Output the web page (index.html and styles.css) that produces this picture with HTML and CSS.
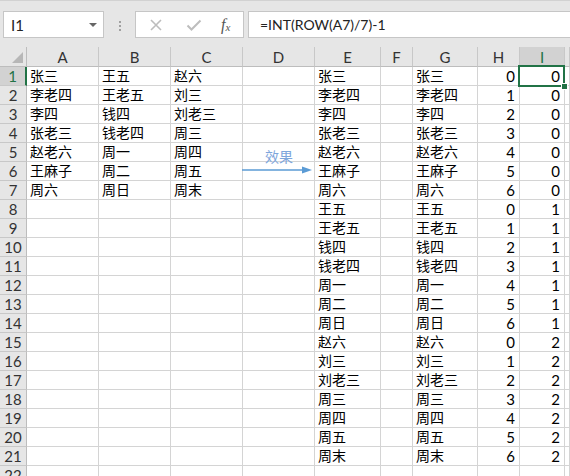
FILE: index.html
```html
<!DOCTYPE html>
<html>
<head>
<meta charset="utf-8">
<link rel="stylesheet" href="styles.css">
</head>
<body>
<div class="app">
  <div class="fbar">
    <div class="namebox"><span class="nb-text">I1</span><span class="nb-caret"></span></div>
    <div class="dots"><i></i><i></i><i></i></div>
    <div class="btnbox">
      <svg class="ic" width="14" height="14" viewBox="0 0 14 14"><path d="M2 2 L12 12 M12 2 L2 12" stroke="#bdbdbd" stroke-width="1.6" fill="none"/></svg>
      <svg class="ic" width="16" height="14" viewBox="0 0 16 14"><path d="M1.5 7.5 L5.5 11.5 L14.5 2.5" stroke="#bdbdbd" stroke-width="2" fill="none"/></svg>
      <span class="fx">f<sub>x</sub></span>
    </div>
    <div class="formula">=INT(ROW(A7)/7)-1</div>
  </div>

  <div class="sheet">
    <div class="row head">
      <div class="c corner"><span class="tri"></span></div>
      <div class="c">A</div><div class="c">B</div><div class="c">C</div><div class="c">D</div><div class="c">E</div><div class="c">F</div><div class="c">G</div><div class="c">H</div><div class="c sel">I</div><div class="c"></div>
    </div>
    <div class="row"><div class="c rh selr">1</div><div class="c">张三</div><div class="c">王五</div><div class="c">赵六</div><div class="c"></div><div class="c">张三</div><div class="c"></div><div class="c">张三</div><div class="c n">0</div><div class="c n active">0<span class="selbox"></span><span class="handle"></span></div><div class="c"></div></div>
    <div class="row"><div class="c rh">2</div><div class="c">李老四</div><div class="c">王老五</div><div class="c">刘三</div><div class="c"></div><div class="c">李老四</div><div class="c"></div><div class="c">李老四</div><div class="c n">1</div><div class="c n">0</div><div class="c"></div></div>
    <div class="row"><div class="c rh">3</div><div class="c">李四</div><div class="c">钱四</div><div class="c">刘老三</div><div class="c"></div><div class="c">李四</div><div class="c"></div><div class="c">李四</div><div class="c n">2</div><div class="c n">0</div><div class="c"></div></div>
    <div class="row"><div class="c rh">4</div><div class="c">张老三</div><div class="c">钱老四</div><div class="c">周三</div><div class="c"></div><div class="c">张老三</div><div class="c"></div><div class="c">张老三</div><div class="c n">3</div><div class="c n">0</div><div class="c"></div></div>
    <div class="row"><div class="c rh">5</div><div class="c">赵老六</div><div class="c">周一</div><div class="c">周四</div><div class="c"></div><div class="c">赵老六</div><div class="c"></div><div class="c">赵老六</div><div class="c n">4</div><div class="c n">0</div><div class="c"></div></div>
    <div class="row"><div class="c rh">6</div><div class="c">王麻子</div><div class="c">周二</div><div class="c">周五</div><div class="c"></div><div class="c">王麻子</div><div class="c"></div><div class="c">王麻子</div><div class="c n">5</div><div class="c n">0</div><div class="c"></div></div>
    <div class="row"><div class="c rh">7</div><div class="c">周六</div><div class="c">周日</div><div class="c">周末</div><div class="c"></div><div class="c">周六</div><div class="c"></div><div class="c">周六</div><div class="c n">6</div><div class="c n">0</div><div class="c"></div></div>
    <div class="row"><div class="c rh">8</div><div class="c"></div><div class="c"></div><div class="c"></div><div class="c"></div><div class="c">王五</div><div class="c"></div><div class="c">王五</div><div class="c n">0</div><div class="c n">1</div><div class="c"></div></div>
    <div class="row"><div class="c rh">9</div><div class="c"></div><div class="c"></div><div class="c"></div><div class="c"></div><div class="c">王老五</div><div class="c"></div><div class="c">王老五</div><div class="c n">1</div><div class="c n">1</div><div class="c"></div></div>
    <div class="row"><div class="c rh">10</div><div class="c"></div><div class="c"></div><div class="c"></div><div class="c"></div><div class="c">钱四</div><div class="c"></div><div class="c">钱四</div><div class="c n">2</div><div class="c n">1</div><div class="c"></div></div>
    <div class="row"><div class="c rh">11</div><div class="c"></div><div class="c"></div><div class="c"></div><div class="c"></div><div class="c">钱老四</div><div class="c"></div><div class="c">钱老四</div><div class="c n">3</div><div class="c n">1</div><div class="c"></div></div>
    <div class="row"><div class="c rh">12</div><div class="c"></div><div class="c"></div><div class="c"></div><div class="c"></div><div class="c">周一</div><div class="c"></div><div class="c">周一</div><div class="c n">4</div><div class="c n">1</div><div class="c"></div></div>
    <div class="row"><div class="c rh">13</div><div class="c"></div><div class="c"></div><div class="c"></div><div class="c"></div><div class="c">周二</div><div class="c"></div><div class="c">周二</div><div class="c n">5</div><div class="c n">1</div><div class="c"></div></div>
    <div class="row"><div class="c rh">14</div><div class="c"></div><div class="c"></div><div class="c"></div><div class="c"></div><div class="c">周日</div><div class="c"></div><div class="c">周日</div><div class="c n">6</div><div class="c n">1</div><div class="c"></div></div>
    <div class="row"><div class="c rh">15</div><div class="c"></div><div class="c"></div><div class="c"></div><div class="c"></div><div class="c">赵六</div><div class="c"></div><div class="c">赵六</div><div class="c n">0</div><div class="c n">2</div><div class="c"></div></div>
    <div class="row"><div class="c rh">16</div><div class="c"></div><div class="c"></div><div class="c"></div><div class="c"></div><div class="c">刘三</div><div class="c"></div><div class="c">刘三</div><div class="c n">1</div><div class="c n">2</div><div class="c"></div></div>
    <div class="row"><div class="c rh">17</div><div class="c"></div><div class="c"></div><div class="c"></div><div class="c"></div><div class="c">刘老三</div><div class="c"></div><div class="c">刘老三</div><div class="c n">2</div><div class="c n">2</div><div class="c"></div></div>
    <div class="row"><div class="c rh">18</div><div class="c"></div><div class="c"></div><div class="c"></div><div class="c"></div><div class="c">周三</div><div class="c"></div><div class="c">周三</div><div class="c n">3</div><div class="c n">2</div><div class="c"></div></div>
    <div class="row"><div class="c rh">19</div><div class="c"></div><div class="c"></div><div class="c"></div><div class="c"></div><div class="c">周四</div><div class="c"></div><div class="c">周四</div><div class="c n">4</div><div class="c n">2</div><div class="c"></div></div>
    <div class="row"><div class="c rh">20</div><div class="c"></div><div class="c"></div><div class="c"></div><div class="c"></div><div class="c">周五</div><div class="c"></div><div class="c">周五</div><div class="c n">5</div><div class="c n">2</div><div class="c"></div></div>
    <div class="row"><div class="c rh">21</div><div class="c"></div><div class="c"></div><div class="c"></div><div class="c"></div><div class="c">周末</div><div class="c"></div><div class="c">周末</div><div class="c n">6</div><div class="c n">2</div><div class="c"></div></div>
    <div class="row"><div class="c rh">22</div><div class="c"></div><div class="c"></div><div class="c"></div><div class="c"></div><div class="c"></div><div class="c"></div><div class="c"></div><div class="c"></div><div class="c"></div><div class="c"></div></div>

    <div class="effect">
      <span class="effect-label">效果</span>
      <svg class="arrow" width="72" height="10" viewBox="0 0 72 10"><path d="M0 5 H62" stroke="#5b9bd5" stroke-width="1.3" fill="none"/><path d="M60 1.5 L70 5 L60 8.5 Z" fill="#5b9bd5"/></svg>
    </div>
  </div>
</div>
</body>
</html>
```

FILE: styles.css
```css
html, body {
  margin: 0;
  padding: 0;
  background: #ffffff;
  overflow: hidden;
}
.app {
  width: 570px;
  height: 476px;
  overflow: hidden;
  font-family: "Lato", "Noto Sans CJK SC", sans-serif;
  color: #000;
}
.fbar {
  height: 47px;
  box-sizing: border-box;
  background: #e6e6e6;
  border-top: 1px solid #d2d2d2;
  display: flex;
  align-items: flex-start;
  padding-top: 10px;
  padding-left: 3px;
}
.namebox {
  width: 101px;
  height: 27px;
  box-sizing: border-box;
  background: #fff;
  border: 1px solid #c6c6c6;
  display: flex;
  align-items: center;
  justify-content: space-between;
  padding: 0 6px 0 7px;
  font-size: 15px;
  color: #222;
}
.nb-caret {
  width: 0;
  height: 0;
  border-left: 4px solid transparent;
  border-right: 4px solid transparent;
  border-top: 4px solid #666;
}
.dots {
  width: 31px;
  display: flex;
  flex-direction: column;
  align-items: center;
  gap: 2px;
  padding-top: 10px;
}
.dots i {
  display: block;
  width: 2px;
  height: 2px;
  background: #a0a0a0;
}
.btnbox {
  width: 109px;
  height: 27px;
  box-sizing: border-box;
  background: #fff;
  border: 1px solid #c6c6c6;
  display: flex;
  align-items: center;
  padding-left: 13px;
  gap: 22px;
}
.btnbox .ic {
  display: block;
}
.btnbox .ic + .ic {
  margin-left: 1px;
}
.fx {
  font-family: "Liberation Serif", serif;
  font-style: italic;
  font-size: 16px;
  color: #555;
  margin-left: -3px;
  line-height: 1;
}
.fx sub {
  font-size: 11px;
  vertical-align: -1px;
}
.formula {
  margin-left: 4px;
  flex: 1;
  height: 27px;
  box-sizing: border-box;
  background: #fff;
  border: 1px solid #c6c6c6;
  border-right: none;
  padding-left: 11px;
  font-size: 14px;
  line-height: 25px;
  color: #222;
}
.sheet {
  position: relative;
}
.row {
  display: grid;
  grid-template-columns: 27px 72px 72px 72px 72px 66px 32px 65px 42px 45px 1fr;
  height: 19px;
}
.row.head {
  height: 20px;
}
.c {
  box-sizing: border-box;
  border-right: 1px solid #d4d4d4;
  border-bottom: 1px solid #d4d4d4;
  font-size: 14px;
  line-height: 18px;
  padding-left: 3px;
  white-space: nowrap;
  overflow: hidden;
  position: relative;
}
.c.n {
  text-align: right;
  padding-left: 0;
  padding-right: 4px;
  font-size: 15px;
}
.head .c {
  background: #e6e6e6;
  border-right: 1px solid #c8c8c8;
  border-bottom: 1px solid #bdbdbd;
  text-align: center;
  padding: 0;
  font-size: 15px;
  line-height: 20px;
  color: #333;
}
.head .c.corner {
  border-right-color: #bdbdbd;
}
.tri {
  position: absolute;
  right: 3px;
  bottom: 3px;
  width: 0;
  height: 0;
  border-left: 11px solid transparent;
  border-bottom: 11px solid #b7b7b7;
}
.head .c.sel {
  background: #d2d2d2;
  color: #217346;
}
.c.rh {
  background: #e6e6e6;
  border-right: 1px solid #bdbdbd;
  border-bottom: 1px solid #c8c8c8;
  text-align: center;
  padding: 0;
  font-size: 15px;
  color: #333;
}
.c.rh.selr {
  background: #d2d2d2;
  color: #217346;
  border-right: 2px solid #217346;
}
.c.active {
  overflow: visible;
  z-index: 2;
}
.selbox {
  position: absolute;
  left: -2px;
  top: -2px;
  width: 47px;
  height: 22px;
  box-sizing: border-box;
  border: 2px solid #217346;
}
.handle {
  position: absolute;
  left: 41px;
  top: 16px;
  width: 7px;
  height: 7px;
  box-sizing: border-box;
  background: #217346;
  border: 1px solid #fff;
}
.effect {
  position: absolute;
  left: 242px;
  top: 100px;
  width: 72px;
  display: flex;
  flex-direction: column;
  align-items: center;
}
.effect-label {
  font-family: "Noto Sans CJK SC", sans-serif;
  font-size: 14px;
  line-height: 18px;
  color: #7ea6dc;
  margin-left: 2px;
}
.arrow {
  display: block;
  margin-top: 0px;
}
```
